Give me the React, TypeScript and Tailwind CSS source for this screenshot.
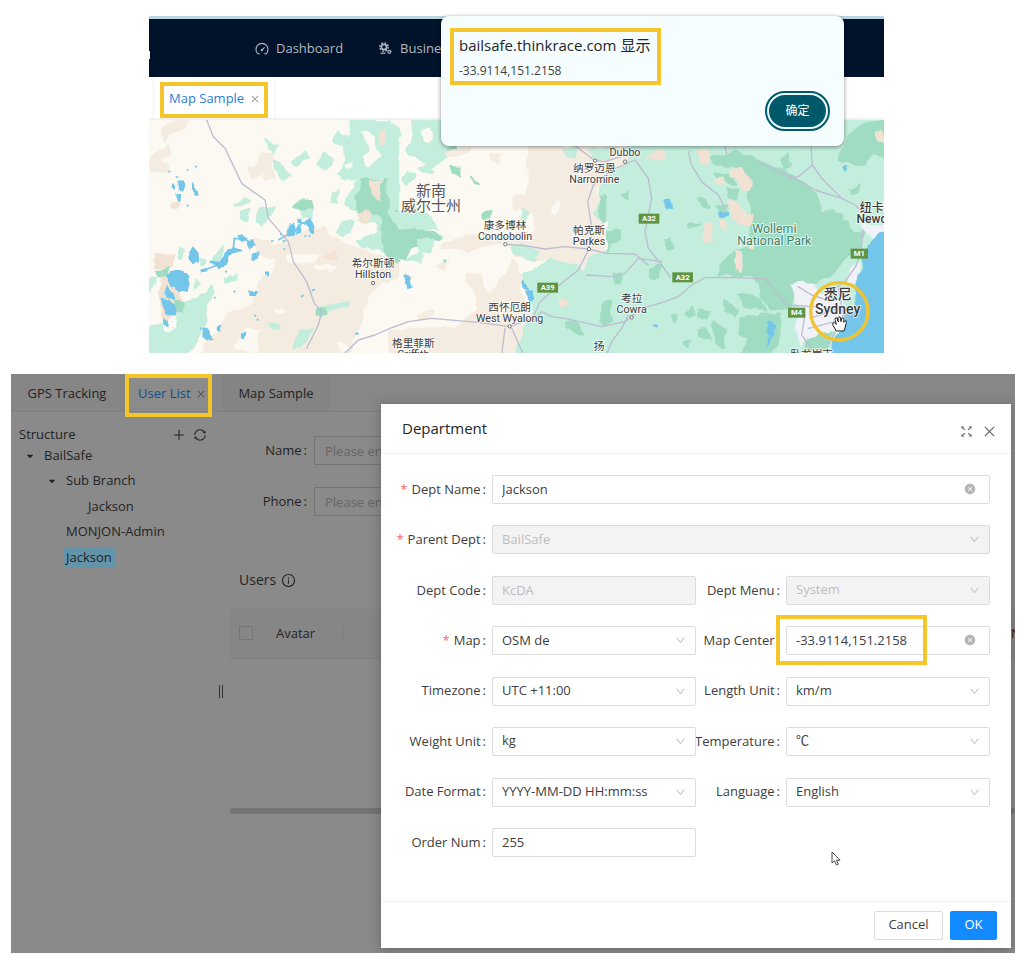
import type { ReactNode } from "react";
import {
  AiFillCloseCircle,
  AiOutlineClose,
  AiOutlineDown,
  AiOutlineFullscreen,
  AiOutlineInfoCircle,
  AiOutlinePlus,
  AiOutlineSync,
} from "react-icons/ai";
import { FaCaretDown } from "react-icons/fa";

const FONT = "font-['Open_Sans','Noto_Sans_CJK_SC',sans-serif]";
const MARK = "absolute border-4 border-[#f5c52c] pointer-events-none";

const CREAM = "#fcf9f2";
const TAN = "#f5ece1";
const SAND = "#f2e2d3";
const MINT = "#c3eddc";
const GREEN = "#a0dcc2";
const WATER = "#73c6ea";
const URBAN = "#f1f2f8";

interface Shape { fill: string; d: string; }

// Western plains
const WEST: Shape[] = [
  { fill: TAN, d: "M50 40L95 15L135 15L120 38L75 55L58 75Z M12 130L70 85L78 115L50 130L72 165L12 180Z" },
  { fill: TAN, d: "M312 160L332 150L345 110L385 115L375 145L382 195L360 195L352 165L330 190L315 190Z" },
  { fill: TAN, d: "M330 375L400 395L430 370L510 340L545 335L555 370L640 400L700 425L760 430L760 480L690 520L655 570L640 650L600 718L170 718L180 690L235 640L245 600L325 570L330 530L350 490L390 470L395 430L345 420Z" },
  { fill: CREAM, d: "M300 640L345 650L330 712L270 700Z M420 428L520 415L510 440L430 440Z M510 455L580 458L560 470L515 466Z M395 585L410 575L418 590L402 598Z M580 680L605 690L590 712Z" },
  { fill: SAND, d: "M35 420L85 422L80 455L30 455Z M45 480L95 500L105 560L75 620L50 600Z M530 425L570 405L580 425L545 438Z M75 265L105 260L100 278L80 278Z" },
  { fill: MINT, d: "M620 15L735 15L760 60L760 430L720 420L700 400L655 400L635 380L700 350L690 320L640 315L655 290L600 265L630 200L660 185L600 195L585 175L600 130L595 95L620 60Z" },
  { fill: CREAM, d: "M650 50Q680 48 690 90L705 120L670 155L655 130L680 105Z M602 148L620 142L620 158L606 160Z" },
  { fill: GREEN, d: "M650 195L725 195L725 250L735 290L760 290L760 440L720 415L710 345L712 300L640 290L632 255Z" },
  { fill: SAND, d: "M675 200L710 195L700 252L682 235Z M640 300L670 290L675 315L645 318Z M700 50L722 45L720 80L706 85Z" },
  { fill: MINT, d: "M362 75L400 92L388 112L372 98Z M383 130L405 140L435 185L412 193L385 155Z M445 138L482 110L486 128L452 150Z M515 152L535 120L560 130L545 167Z M562 235L575 225L577 265L562 260Z M270 268L300 245L315 255L280 272Z M290 290L315 285L305 317L290 310Z" },
  { fill: MINT, d: "M340 285L392 270L388 292L365 300L357 333L338 325Z M575 350L590 320L630 320L620 345L585 367Z M565 80L575 50L605 65L602 90Z M205 425L235 392L225 430L203 440Z M235 490L275 475L278 495L240 502Z M150 490L168 500L152 522Z M105 400L118 403L108 430L97 425Z M475 285L502 280L500 308L480 306Z" },
  { fill: MINT, d: "M12 640L50 620L60 650L105 640L90 600L115 565L160 545L200 508L206 530L180 570L190 610L150 690L125 718L12 718Z M12 490L30 490L20 530L12 525Z M365 628L405 628L405 641L380 641Z M445 692L470 650L500 640L490 675L450 706Z M513 590L540 575L603 563L603 576L545 592L525 607Z M168 430L182 432L178 452L168 450Z" },
  { fill: GREEN, d: "M445 277L475 255L500 262L497 285Z M38 465L75 455L65 480L38 488Z M90 560L118 565L112 592L92 590Z M515 588L540 582L542 598L522 604Z" },
  { fill: WATER, d: "M135 415L145 403L158 412L160 440L148 448L136 435Z M68 475L95 467L122 474L132 500L125 528L105 532L90 512L75 515L68 500Z M60 520L85 535L88 552L66 545Z M52 550L70 555L88 575L84 600L66 592Z M195 440L225 438L250 405L270 402L290 410L265 415L248 420L246 448L225 460Z" },
  { fill: WATER, d: "M280 362L292 356L302 366L292 378L282 372Z M305 380L325 378L330 390L315 398Z M326 412L345 408L338 428L324 434Z M433 328L446 326L445 360L434 362Z M455 335L465 330L463 352L453 354Z M482 320L495 312L503 330L505 355L492 350L480 330Z M462 310L472 308L474 320L464 320Z" },
  { fill: WATER, d: "M168 466L185 462L184 470L170 472Z M102 206L116 202L116 224L104 222Z M95 238L106 236L104 262L97 256Z M146 205L152 212L158 240L148 238Z M84 210L90 225L82 222Z M175 640L190 645L204 672L192 676L178 658Z M287 655L298 652L296 668L288 664Z M218 634L232 628L226 645Z M60 612L76 622L70 632L58 624Z M362 470L375 466L374 478L364 478Z M315 525L329 524L328 537L318 536Z" },
];

// Central west, between the plains and the ranges
const CENTRE: Shape[] = [
  { fill: MINT, d: "M65 15L152 15L160 70L198 98L198 112L150 140L120 152L60 120L50 100L72 70Z M-5 20L25 35L30 65L0 80Z M35 195L55 168L75 182L52 210Z M85 165L110 150L128 165L100 175Z M-5 230L20 245L15 300L80 278L130 310L142 345L0 350Z" },
  { fill: CREAM, d: "M98 50L118 38L130 60L118 82L104 78Z" },
  { fill: GREEN, d: "M-5 300L20 345L105 350L150 360L148 378L105 385L60 400L45 430L-5 440Z M180 155L215 158L215 185L190 172Z M245 180L268 212L255 205Z M172 98L200 92L198 108Z M282 295L302 290L298 312L285 312Z" },
  { fill: MINT, d: "M80 370L130 378L120 410L90 415Z M390 285L412 288L408 315L392 308Z M50 430L100 405L90 440Z M105 655L128 660L125 680L105 676Z" },
  { fill: TAN, d: "M412 95L760 90L700 150L650 180L620 225L640 320L640 400L600 430L575 467L470 430L430 440L380 420L360 388L300 388L240 405L155 398L165 378L240 360L330 362L440 350L430 290L370 280L375 240L410 240L418 170Z" },
  { fill: TAN, d: "M228 485L270 478L300 540L350 470L370 430L392 480L385 540L422 590L380 718L-5 718L-5 680L60 640L200 640L270 580L235 510Z M-5 655L60 640L50 690L-5 700Z M165 110L240 98L230 112L185 125Z M80 595L130 590L120 612L85 610Z M145 455L175 430L165 465Z M300 120L330 115L320 145Z" },
  { fill: CREAM, d: "M330 570L350 562L352 585L334 588Z M485 270L505 262L505 288L490 288Z M320 345L350 340L340 352Z" },
  { fill: MINT, d: "M760 90L760 718L380 718L400 640L432 590L420 540L395 478L440 462L480 432L520 440L580 468L600 430L650 405L650 320L618 300L632 225L655 180L705 150Z M520 95L560 95L555 130L530 120Z M360 395L400 388L440 410L435 440L405 425L370 412Z M590 100L680 96L660 135L620 140Z" },
  { fill: GREEN, d: "M630 242L648 240L650 290L642 320L628 280Z M650 348L690 345L690 375L660 380L650 415Z M700 238L725 230L722 252L708 255Z M670 475L695 468L695 500L675 505Z M640 565L665 560L660 600L668 620L640 630L632 600Z M530 625L550 620L578 655L560 662Z" },
  { fill: SAND, d: "M508 555L528 550L528 568L512 574Z" },
  { fill: WATER, d: "M45 485L58 488L66 515L54 520Z M396 497L408 505L412 525L400 520Z M404 530L424 528L430 555L418 560Z" },
  { fill: GREEN, d: "M157 435L168 432L166 444Z" },
];

// Ranges and coast
const EAST: Shape[] = [
  { fill: MINT, d: "M-20 0L760 0L760 720L-20 720Z" },
  { fill: GREEN, d: "M225 130L300 110L400 150L470 175L550 240L560 290L600 288L650 335L655 360L690 350L670 400L640 420L600 470L540 500L480 510L460 580L400 580L380 545L372 500L345 480L250 482L262 440L300 408L345 395L352 300L340 240L352 190L285 150L240 150Z" },
  { fill: GREEN, d: "M610 130L640 60L690 25L760 15L760 120L700 120L690 150L640 138Z M440 130L462 115L465 150L448 160Z M195 250L215 255L225 285L208 275Z M90 380L108 372L112 405L98 402Z M42 465L72 455L70 485L48 488Z M240 175L290 180L300 210L265 205Z M270 225L310 222L305 250L280 250Z M245 275L280 270L260 290Z M155 330L190 322L170 345Z" },
  { fill: GREEN, d: "M150 590L170 570L185 600L165 610Z M195 580L225 585L215 620L195 605Z M235 625L275 640L262 700L240 680Z M270 560L310 585L300 600L275 590Z M305 535L375 550L390 590L330 570Z M315 610L385 600L440 595L430 680L400 715L320 718L345 670L310 650Z M105 605L125 600L120 620Z M185 645L215 640L222 668L190 662Z M145 680L165 675L160 700Z M640 225L678 210L672 225L650 238Z M535 660L595 650L560 718L500 718Z" },
  { fill: SAND, d: "M35 125L80 108L92 125L70 138L58 125Z M198 108L220 115L215 148L198 140Z M240 195L270 190L272 208L245 210Z M288 165L325 165L352 195L345 222L320 222L305 190L288 188Z M282 255L305 258L325 285L350 300L345 330L320 325L285 310Z M255 315L275 320L280 345L260 335Z M208 325L230 325L228 375L205 378Z M302 410L318 415L322 465L302 455Z M725 50L745 45L745 85L730 78Z M340 400L362 385L360 400Z" },
  { fill: URBAN, d: "M475 508L530 505L555 530L600 540L640 590L640 640L590 650L540 655L500 690L480 640L500 600L478 560Z M640 470L675 440L668 500L640 500Z M680 330L750 330L750 350L715 372L695 352Z" },
  { fill: WATER, d: "M760 345L728 358L708 385L690 420L680 470L668 510L672 540L655 590L632 600L636 630L610 655L590 690L582 720L760 720Z" },
  { fill: WATER, d: "M88 262L102 256L110 278L98 284Z M252 288L272 290L268 305L258 302Z M400 625L418 630L412 660L395 695L405 660Z M55 632L72 630L70 638Z M624 158L632 152L630 170Z" },
];

const ROADS = [
  "M185 15L205 65L240 100L290 205L360 255L370 310L430 380L445 440L485 500L508 565L530 590L520 630L485 700",
  "M600 715L640 675L690 660L735 640L790 620L860 610L1000 622L1095 635L1175 605L1190 590L1220 605L1260 610L1370 635L1440 620L1490 580L1560 560L1600 545L1640 510L1680 488L1760 487L1860 492L1885 520L1925 570L2010 575",
  "M1081 388L1140 392L1200 402L1260 395L1330 402L1385 415L1470 417L1510 450",
  "M1080 640L1070 718 M1100 640L1135 718 M1165 605L1185 560L1250 505L1300 465L1330 405L1342 350L1328 260L1345 210L1400 165L1470 135L1510 190L1520 250L1500 350L1510 400L1550 450L1575 485",
  "M1290 92L1350 137L1380 140L1440 120 M1450 600L1430 640L1400 680L1385 718 M1325 480L1400 485L1440 475L1480 430L1550 440",
  "M1740 90L1745 120 M1630 110L1640 150L1670 200L1720 240L1740 280",
  "M1998 90L2002 150L2030 190L2060 220L2090 250L2130 270L2160 300 M2002 150L1960 185L1930 190 M1840 140L1900 170L1950 190L2010 225L2090 250",
  "M2155 345L2148 400L2135 450L2100 500L2070 520L2060 560L2000 540L1960 515 M2080 520L2095 600L2050 690 M1995 610L2080 580L2110 610 M1990 640L2070 620L2110 625 M1980 600L1970 660L2000 700",
];

interface Place { x: number; y: number; lines: string[]; dot?: [number, number]; size?: number; dy?: number; bold?: boolean; color?: string; }

const PLACES: Place[] = [
  { x: 684, y: 456, lines: ["希尔斯顿", "Hillston"], dot: [684, 504] },
  { x: 858, y: 244, lines: ["新南", "威尔士州"], size: 45, dy: 44, color: "#575757" },
  { x: 1080, y: 341, lines: ["康多博林", "Condobolin"], dot: [1081, 388] },
  { x: 1348, y: 171, lines: ["纳罗迈恩", "Narromine"], dot: [1350, 137] },
  { x: 1440, y: 123, lines: ["Dubbo"], dot: [1440, 140] },
  { x: 1332, y: 357, lines: ["帕克斯", "Parkes"], dot: [1332, 402] },
  { x: 1094, y: 588, lines: ["西怀厄朗", "West Wyalong"], dot: [1094, 634] },
  { x: 1460, y: 560, lines: ["考拉", "Cowra"], dot: [1460, 607] },
  { x: 805, y: 697, lines: ["格里菲斯", "Griffith"] },
  { x: 1362, y: 705, lines: ["扬"] },
  { x: 1888, y: 353, lines: ["Wollemi", "National Park"], size: 37, dy: 38, color: "#3f8466" },
  { x: 2180, y: 290, lines: ["纽卡", "Newc"], size: 36, dy: 34, bold: true },
  { x: 2078, y: 553, lines: ["悉尼", "Sydney"], size: 42, dy: 44, bold: true },
  { x: 2000, y: 730, lines: ["卧龙岗市"] },
];

const SHIELDS: [string, number, number][] = [
  ["A39", 1208, 518],
  ["A32", 1512, 311],
  ["A32", 1613, 487],
  ["M1", 2143, 416],
  ["M4", 1955, 593],
];

const Shapes = ({ shapes, shift }: { shapes: Shape[]; shift: number }) => (
  <g transform={`translate(${shift} 0)`} strokeLinejoin="round" strokeWidth={5}>
    {shapes.map((s, i) => <path key={i} d={s.d} fill={s.fill} stroke={s.fill} />)}
  </g>
);

const RegionMap = () => (
  <svg viewBox="12 15 2205 699" preserveAspectRatio="xMidYMid slice" className="block h-[233px] w-full" role="img" aria-label="Map of New South Wales">
    <defs>
      <filter id="coast" x="0" y="0" width="100%" height="100%" colorInterpolationFilters="sRGB">
        <feTurbulence type="fractalNoise" baseFrequency="0.025" numOctaves={2} seed={4} result="noise" />
        <feDisplacementMap in="SourceGraphic" in2="noise" scale={26} xChannelSelector="R" yChannelSelector="G" />
      </filter>
    </defs>
    <rect x="0" y="0" width="2230" height="730" fill={CREAM} />
    <g filter="url(#coast)">
      <Shapes shapes={WEST} shift={0} />
      <Shapes shapes={CENTRE} shift={735} />
      <Shapes shapes={EAST} shift={1470} />
    </g>
    <g fill="none" stroke={WATER} strokeWidth={5}>
      <path d="M180 465L230 445L265 400L268 370L300 372L320 385M400 375L425 360M445 355L470 325L500 320" />
      <path d="M70 170h6M125 165h6M150 155h6M92 186h8M125 272h6M265 530h7M240 470h6M207 548h5M327 602h6M335 614h6M378 378h8M405 358h6M412 378h10M415 402h6M478 363h6M490 363h6M468 545l8-4M500 527l10-4M630 656h12M165 640h5" />
    </g>
    <g fill="none" stroke="#bcbdd3" strokeWidth={4} strokeLinejoin="round" strokeLinecap="round">
      {ROADS.map((d) => <path key={d} d={d} />)}
    </g>
    <g fill="#ffffff" stroke="#6f6f6f" strokeWidth={3}>
      {PLACES.map((p) => p.dot && <circle key={p.lines[0]} cx={p.dot[0]} cy={p.dot[1]} r={5} />)}
    </g>
    <g className="font-[Roboto,'Noto_Sans_CJK_SC',sans-serif]" textAnchor="middle" stroke="#ffffff" strokeOpacity={0.7} strokeWidth={6} strokeLinejoin="round" paintOrder="stroke">
      {PLACES.map((p) => (
        <text key={p.lines[0]} fontSize={p.size ?? 32} fontWeight={p.bold ? 500 : 400} fill={p.color ?? "#3c3c3c"}>
          {p.lines.map((line, i) => <tspan key={line} x={p.x} y={p.y + i * (p.dy ?? 33)}>{line}</tspan>)}
        </text>
      ))}
    </g>
    <g className="font-[Roboto,sans-serif]" textAnchor="middle" fontSize={23} fontWeight={700}>
      {SHIELDS.map(([name, x, y]) => (
        <g key={`${name}-${x}`}>
          <rect x={x - (name.length > 2 ? 31 : 26)} y={y - 15} width={name.length > 2 ? 62 : 52} height={30} fill="#5f9440" />
          <text x={x} y={y + 8} fill="#ffffff">{name}</text>
        </g>
      ))}
    </g>
    <circle cx={2083} cy={589} r={86} fill="none" stroke="#f0c430" strokeWidth={10} />
    <path
      transform="translate(2062 604)"
      d="M12 44L2 27Q-2 19 6 19L12 24L8 9Q8 3 14 5L18 17L17 4Q19-2 24 3L26 16L28 6Q33 1 35 8L34 18L38 13Q43 12 42 18L38 35L35 44Z"
      fill="#ffffff" stroke="#222222" strokeWidth={3} strokeLinejoin="round"
    />
  </svg>
);

const GaugeIcon = () => (
  <svg viewBox="0 0 14 14" className="size-[14px]" fill="none" stroke="currentColor" strokeWidth="1.1" strokeLinecap="round">
    <path d="M4.5 11.7H2.8A6 6 0 1 1 11.2 11.7H9.5M7 8L9.3 5.6" />
    <circle cx="6.8" cy="8.2" r="0.6" />
  </svg>
);

const GearsIcon = () => (
  <svg viewBox="0 0 13 13" className="size-[13px]" fill="none" stroke="currentColor">
    <circle cx="5" cy="5" r="2.7" strokeWidth="1.8" />
    <circle cx="5" cy="5" r="4.2" strokeWidth="1.4" strokeDasharray="1.7 1.6" />
    <circle cx="10.4" cy="9.8" r="1.5" strokeWidth="1.3" />
    <path d="M1.5 11.2H6.5" strokeWidth="1.2" />
  </svg>
);

const MapPreview = () => (
  <section className="relative ml-[149px] mr-[140px] border-t-[3px] border-[#b9d5e0]">
    <nav className="flex h-[58px] items-center overflow-hidden bg-[#00132b] pt-px text-[13px] text-[#b3bac3]">
      <span className="mt-3 h-2 w-px bg-white" />
      <a href="#dashboard" className="ml-[105px] flex items-center gap-[7px]">
        <GaugeIcon /> Dashboard
      </a>
      <a href="#business" className="ml-9 flex items-center gap-2">
        <GearsIcon /> Business
      </a>
    </nav>
    <div className="flex h-[43px] items-stretch border-b-2 border-[#f1f1f1] bg-white pl-1 text-[13px]">
      <div className="relative flex items-center gap-[6px] border-x border-[#f3f3f3] pl-[15px] pr-[14px] pt-[3px]">
        <button className="text-[#1f7fd6]">Map Sample</button>
        <button aria-label="Close Map Sample" className="text-[#8c8c8c]"><AiOutlineClose className="size-[10px]" /></button>
        <span className={`${MARK} bottom-0 left-[6px] right-[6px] top-[5px]`} />
      </div>
    </div>
    <RegionMap />
    <div role="alertdialog" aria-label="Coordinates" className="absolute -top-[3px] right-[40px] flex h-[130px] w-[403px] flex-col rounded-lg bg-[#f6fdff] pl-[18px] pr-4 pt-[17px] shadow-[0_1px_4px_rgba(0,0,0,0.45)]">
      <span className={`${MARK} left-[9px] top-3 h-[57px] w-[211px]`} />
      <h2 className="text-[15px] leading-6 text-[#1f2426]">bailsafe.thinkrace.com 显示</h2>
      <p className="mt-1 text-xs leading-5 text-[#3d4345]">-33.9114,151.2158</p>
      <button className="ml-auto mt-3 flex h-9 w-[61px] items-center justify-center rounded-full border-2 border-[#e9fbff] bg-[#00596b] text-xs text-white outline-2 outline-[#00596b]">确定</button>
    </div>
  </section>
);

const TREE = [
  { name: "BailSafe", indent: "pl-[14px]", open: true },
  { name: "Sub Branch", indent: "pl-[36px]", open: true },
  { name: "Jackson", indent: "pl-[58px]", open: false },
  { name: "MONJON-Admin", indent: "pl-[36px]", open: false },
  { name: "Jackson", indent: "pl-[36px]", open: false, selected: true },
];

const UserPage = () => (
  <div className="col-start-1 row-start-1 flex min-w-0 flex-col text-[13px] text-[#232323]">
    <div className="flex h-[38px] items-stretch border-b border-[#7f7f7f] bg-[#878787]">
      <button className="w-[113px] border-r border-[#808080] bg-[#868686] pt-[2px]">GPS Tracking</button>
      <div className="relative ml-px flex w-[87px] items-center gap-[5px] bg-[#8b8b8b] pl-[13px] pt-[2px]">
        <button className="text-[#0f4e8d]">User List</button>
        <button aria-label="Close User List" className="text-[#4c4c4c]"><AiOutlineClose className="size-[10px]" /></button>
        <span className={`${MARK} -bottom-[6px] left-0 right-0 top-0`} />
      </div>
      <button className="ml-[10px] w-[108px] bg-[#848484] pt-[2px]">Map Sample</button>
    </div>
    <div className="flex flex-1">
      <aside className="w-[206px] shrink-0 pl-2 pt-3">
        <div className="flex h-[22px] items-center gap-[7px] pr-[10px]">
          <span className="flex-1">Structure</span>
          <button aria-label="Add"><AiOutlinePlus className="size-[14px]" /></button>
          <button aria-label="Refresh"><AiOutlineSync className="size-[14px]" /></button>
        </div>
        <ul className="-mt-[3px] grid h-[127px] auto-rows-fr">
          {TREE.map((node, i) => (
            <li key={i} className={`flex items-center ${node.indent}`}>
              <span className="-ml-[14px] flex w-[22px] justify-center">{node.open && <FaCaretDown className="size-[10px]" />}</span>
              <span className={node.selected ? "bg-[#6494aa] px-[3px] leading-[21px]" : "px-[3px]"}>{node.name}</span>
            </li>
          ))}
        </ul>
      </aside>
      <div className="flex w-[13px] items-center justify-start pt-[18px]">
        <span className="ml-[2px] h-[13px] w-1 border-x border-[#333333]" />
      </div>
      <main className="min-w-0 flex-1 overflow-hidden pt-6">
        {["Name", "Phone"].map((label) => (
          <div key={label} className="mb-[22px] flex h-[29px] items-center">
            <label htmlFor={`filter-${label}`} className="w-[84px] pr-[7px] text-right">{label}<span className="ml-[2px]">:</span></label>
            <input id={`filter-${label}`} placeholder="Please enter" className="h-full w-[200px] border border-[#747474] px-[10px] placeholder:text-[#666666]" />
          </div>
        ))}
        <h3 className="ml-[9px] mt-[52px] flex h-6 items-center gap-[5px] text-sm">Users <AiOutlineInfoCircle className="size-[15px]" /></h3>
        <table className="mt-[17px] w-full table-fixed border-b border-[#808080] bg-[#868686]">
          <thead>
            <tr className="h-[49px] text-left">
              <th className="w-[46px] pl-[9px]"><input type="checkbox" aria-label="Select all" className="block size-[14px] appearance-none border border-[#767676]" /></th>
              <th className="w-[67px] font-normal">Avatar</th>
              <th><span className="block h-4 border-l border-[#808080]" /></th>
              <th className="w-1 whitespace-nowrap font-normal">Name</th>
            </tr>
          </thead>
        </table>
        <div className="mt-[149px] h-[6px] rounded-full bg-[#747474]" />
      </main>
    </div>
  </div>
);

interface FieldProps {
  label: string;
  value: string;
  kind?: "input" | "select";
  required?: boolean;
  disabled?: boolean;
  clearable?: boolean;
  wide?: boolean;
  mark?: ReactNode;
}

const Field = ({ label, value, kind = "select", required, disabled, clearable, wide, mark }: FieldProps) => {
  const id = label.toLowerCase().replace(" ", "-");
  const box = `block h-[29px] w-full appearance-none rounded-[2px] border border-[#dcdcdc] px-[9px] pb-px outline-none ${
    disabled ? "bg-[#f3f3f3] text-[#bdbdbd] opacity-100" : "bg-white text-[#404040]"
  }`;
  return (
    <>
      <label htmlFor={id} className="flex items-center justify-end whitespace-nowrap pr-[6px] text-[#404040]">
        {required && <span className="mr-1 text-[#f0656a]">*</span>}
        {label}<span className="ml-[2px]">:</span>
      </label>
      <div className={`relative ${wide ? "col-span-3" : ""}`}>
        {kind === "input" ? (
          <input id={id} defaultValue={value} disabled={disabled} className={box} />
        ) : (
          <select id={id} disabled={disabled} className={box}><option>{value}</option></select>
        )}
        {kind === "select" && <AiOutlineDown className="pointer-events-none absolute right-[10px] top-[9px] size-[11px] text-[#bdbdbd]" />}
        {clearable && (
          <button aria-label={`Clear ${label}`} className="absolute right-[14px] top-2 text-[#b5b5b5]"><AiFillCloseCircle className="size-[12px]" /></button>
        )}
        {mark}
      </div>
    </>
  );
};

const DepartmentDialog = () => (
  <div role="dialog" aria-label="Department" className="relative z-10 col-start-1 row-start-1 mb-[5px] ml-[370px] mr-1 mt-[30px] bg-white text-[13px] shadow-[0_2px_12px_rgba(0,0,0,0.25)]">
    <header className="flex h-[50px] items-center gap-2 border-b border-[#f0f0f0] pl-[21px] pr-[14px] text-[#666666]">
      <h2 className="flex-1 text-[15px] text-[#262626]">Department</h2>
      <button aria-label="Full screen" className="mt-[5px]"><AiOutlineFullscreen className="size-[15px]" /></button>
      <button aria-label="Close" className="mt-[5px]"><AiOutlineClose className="size-[15px]" /></button>
    </header>
    <form className="grid h-[447px] grid-cols-[111px_minmax(0,1fr)_90px_minmax(0,1fr)] content-between pb-[44px] pr-[21px] pt-[21px]">
      <Field label="Dept Name" value="Jackson" kind="input" required clearable wide />
      <Field label="Parent Dept" value="BailSafe" required disabled wide />
      <Field label="Dept Code" value="KcDA" kind="input" disabled />
      <Field label="Dept Menu" value="System" disabled />
      <Field label="Map" value="OSM de" required />
      <Field label="Map Center" value="-33.9114,151.2158" kind="input" clearable mark={<span className={`${MARK} -left-[10px] -top-[11px] h-[50px] w-[151px]`} />} />
      <Field label="Timezone" value="UTC +11:00" />
      <Field label="Length Unit" value="km/m" />
      <Field label="Weight Unit" value="kg" />
      <Field label="Temperature" value="℃" />
      <Field label="Date Format" value="YYYY-MM-DD HH:mm:ss" />
      <Field label="Language" value="English" />
      <Field label="Order Num" value="255" kind="input" />
    </form>
    <footer className="flex h-[47px] items-center justify-end gap-[7px] border-t border-[#f0f0f0] pr-[14px]">
      <button className="h-[29px] w-[69px] rounded-[2px] border border-[#dcdcdc] text-[#404040]">Cancel</button>
      <button className="h-[29px] w-[47px] rounded-[2px] bg-[#118bff] text-white">OK</button>
    </footer>
    <svg viewBox="0 0 10 15" className="absolute bottom-[82px] right-[170px] h-[15px] w-[10px]">
      <path d="M1 1V12L3.5 9.8L5.5 14L7.3 13.2L5.5 9.2H9Z" fill="#ffffff" stroke="#333333" strokeWidth="0.9" />
    </svg>
  </div>
);

const App = () => (
  <div className={`${FONT} bg-white pb-3 pt-4`}>
    <MapPreview />
    <section className="ml-[11px] mr-[9px] mt-[21px] grid overflow-hidden bg-[#8a8a8a]">
      <UserPage />
      <DepartmentDialog />
    </section>
  </div>
);

export default App;
